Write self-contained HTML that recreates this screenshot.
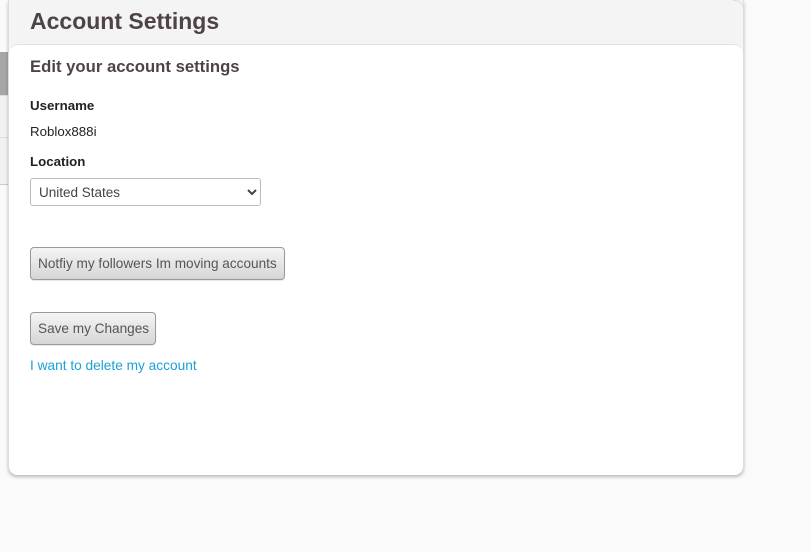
<!DOCTYPE html>
<html><head><style>
body{margin:0;width:811px;height:552px;background:#fafafa;font-family:"Liberation Sans",sans-serif;position:relative;overflow:hidden;color:#343434}
.bg1{position:absolute;left:0;top:52px;width:10px;height:43px;background:#a6a6a6}
.bg2{position:absolute;left:0;top:95px;width:10px;height:88px;background:#f2f2f2;border-top:1px solid #e0e0e0;border-bottom:1px solid #ccc}
.bg3{position:absolute;left:0;top:137px;width:10px;height:1px;background:#ddd}
.outer{position:absolute;left:8px;top:0;width:734px;height:474px;background:#f4f4f4;border:1px solid #ddd;border-top:none;border-radius:0 0 9px 9px;box-shadow:0 2px 3px rgba(0,0,0,.25)}
.outer:before{content:"";position:absolute;right:-1px;top:0;width:10px;height:10px;border-top-right-radius:9px;border:1px solid #ddd;border-left:none;border-bottom:none}
h1{position:absolute;left:21px;top:8px;margin:0;font-size:23px;font-weight:bold;color:#4e4346}
.inner{position:absolute;left:0;top:44px;width:734px;height:430px;background:#fff;border-top:1px solid #e3e3e3;border-radius:9px 9px 9px 9px}
h2{position:absolute;left:21px;top:12px;margin:0;font-size:16.7px;color:#4e4346}
.lbl{position:absolute;left:21px;font-size:13.3px;font-weight:bold;color:#222}
.txt{position:absolute;left:21px;font-size:13.3px;color:#222}
select{position:absolute;left:21px;top:133px;width:231px;height:28px;font-family:"Liberation Sans",sans-serif;font-size:13.5px;color:#444;border:1px solid #bbb;border-radius:3px;background:#fff;padding-left:4px}
.btn{position:absolute;left:21px;height:33px;border:1px solid #999;border-radius:4px;background:linear-gradient(#f5f5f5,#d6d6d6);font-size:13.6px;color:#555;line-height:31px;padding:0 0 0 7px;box-sizing:border-box;white-space:nowrap;box-shadow:0 1px 1px rgba(0,0,0,.1)}
a{position:absolute;left:21px;top:313px;font-size:13.7px;color:#1aa1d8;text-decoration:none}
</style></head><body>
<div class="bg1"></div><div class="bg2"></div><div class="bg3"></div>
<div class="outer">
<h1>Account Settings</h1>
<div class="inner">
<h2>Edit your account settings</h2>
<div class="lbl" style="top:53px">Username</div>
<div class="txt" style="top:79px">Roblox888i</div>
<div class="lbl" style="top:109px">Location</div>
<select><option>United States</option></select>
<div class="btn" style="top:202px;width:255px">Notfiy my followers Im moving accounts</div>
<div class="btn" style="top:267px;width:126px">Save my Changes</div>
<a>I want to delete my account</a>
</div></div>
</body></html>
